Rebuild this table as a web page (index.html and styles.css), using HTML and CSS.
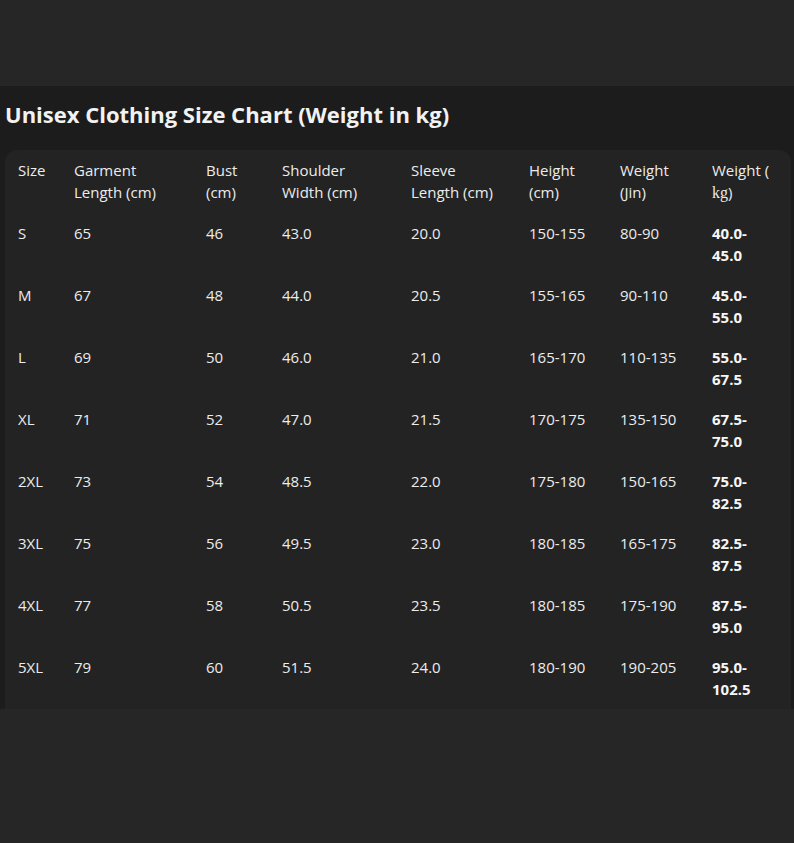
FILE: index.html
```html
<!DOCTYPE html>
<html>
<head>
<meta charset="utf-8">
<link rel="stylesheet" href="styles.css">
</head>
<body>
<div class="top"></div>
<section class="panel">
  <h1 class="title">Unisex Clothing Size Chart (Weight in kg)</h1>
  <div class="card">
    <table class="chart">
      <colgroup>
        <col class="c1"><col class="c2"><col class="c3"><col class="c4"><col class="c5"><col class="c6"><col class="c7"><col class="c8">
      </colgroup>
      <thead>
        <tr>
          <th>Size</th>
          <th>Garment Length (cm)</th>
          <th>Bust (cm)</th>
          <th>Shoulder Width (cm)</th>
          <th>Sleeve Length (cm)</th>
          <th>Height (cm)</th>
          <th>Weight (Jin)</th>
          <th>Weight ( <span class="kg">kg</span>)</th>
        </tr>
      </thead>
      <tbody>
        <tr><td>S</td><td>65</td><td>46</td><td>43.0</td><td>20.0</td><td>150-155</td><td>80-90</td><td class="b">40.0-45.0</td></tr>
        <tr><td>M</td><td>67</td><td>48</td><td>44.0</td><td>20.5</td><td>155-165</td><td>90-110</td><td class="b">45.0-55.0</td></tr>
        <tr><td>L</td><td>69</td><td>50</td><td>46.0</td><td>21.0</td><td>165-170</td><td>110-135</td><td class="b">55.0-67.5</td></tr>
        <tr><td>XL</td><td>71</td><td>52</td><td>47.0</td><td>21.5</td><td>170-175</td><td>135-150</td><td class="b">67.5-75.0</td></tr>
        <tr><td>2XL</td><td>73</td><td>54</td><td>48.5</td><td>22.0</td><td>175-180</td><td>150-165</td><td class="b">75.0-82.5</td></tr>
        <tr><td>3XL</td><td>75</td><td>56</td><td>49.5</td><td>23.0</td><td>180-185</td><td>165-175</td><td class="b">82.5-87.5</td></tr>
        <tr><td>4XL</td><td>77</td><td>58</td><td>50.5</td><td>23.5</td><td>180-185</td><td>175-190</td><td class="b">87.5-95.0</td></tr>
        <tr><td>5XL</td><td>79</td><td>60</td><td>51.5</td><td>24.0</td><td>180-190</td><td>190-205</td><td class="b">95.0-102.5</td></tr>
      </tbody>
    </table>
  </div>
</section>
</body>
</html>
```
FILE: styles.css
```css
html, body {
  margin: 0;
  padding: 0;
}
body {
  background: #262626;
  font-family: "Open Sans", "Liberation Sans", sans-serif;
  color: #ececec;
  width: 794px;
  height: 843px;
  overflow: hidden;
}
.top {
  height: 86px;
}
.panel {
  background: #1c1c1c;
  padding-top: 13px;
}
.title {
  margin: 0 0 21px 5px;
  font-size: 22px;
  line-height: 30px;
  font-weight: 700;
  color: #f2f2f2;
}
.card {
  margin-left: 5px;
  margin-right: 3px;
  background: #232323;
  border-radius: 12px 12px 0 0;
  padding-left: 13px;
}
.chart {
  border-collapse: collapse;
  table-layout: fixed;
  font-size: 15px;
  line-height: 22px;
}
.c1 { width: 56px; }
.c2 { width: 132px; }
.c3 { width: 76px; }
.c4 { width: 129px; }
.c5 { width: 118px; }
.c6 { width: 91px; }
.c7 { width: 92px; }
.c8 { width: 62px; }
.chart th, .chart td {
  padding: 9px 24px 9px 0;
  text-align: left;
  vertical-align: top;
  font-weight: 500;
}
.chart th:last-child, .chart td:last-child {
  padding-right: 0;
}
.chart th {
  color: #ececec;
}
.chart thead tr {
  height: 60px;
}
.chart tbody tr {
  height: 62px;
}
.chart td.b {
  font-weight: 700;
  color: #f6f6f6;
}
.kg {
  font-family: "Liberation Serif", serif;
  font-size: 16px;
}
```
